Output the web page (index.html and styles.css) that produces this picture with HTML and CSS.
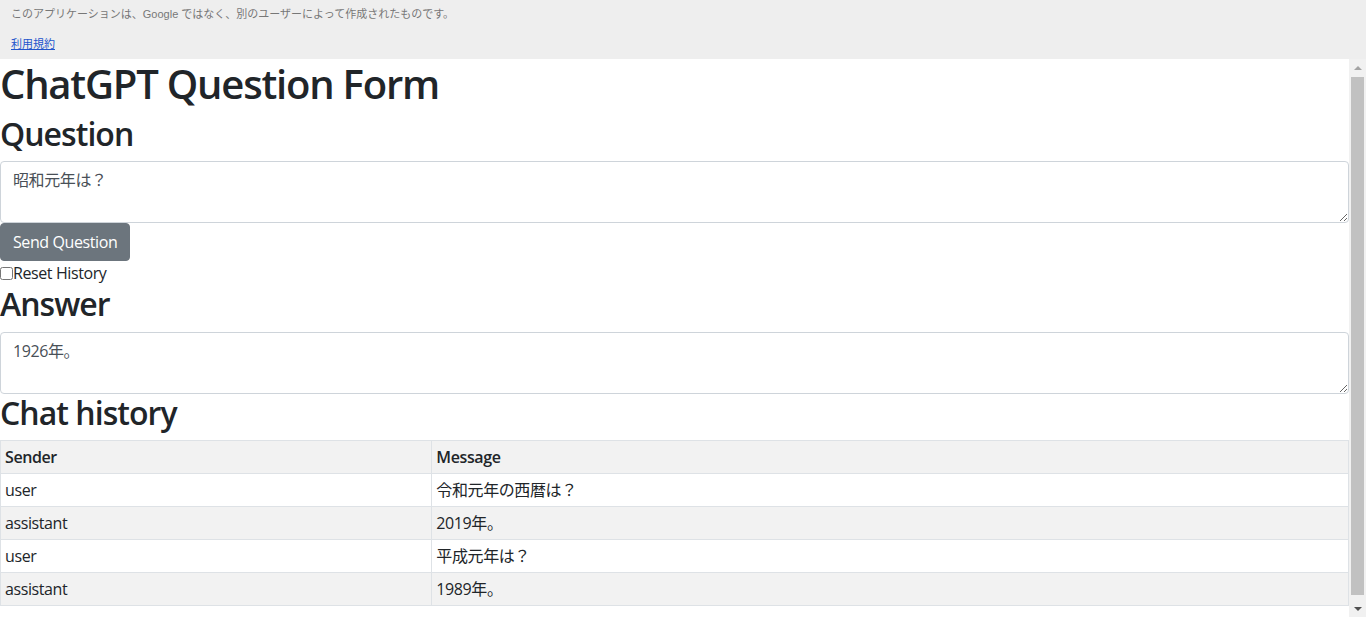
FILE: index.html
```html
<!DOCTYPE html>
<html lang="ja">
<head>
    <meta charset="UTF-8">
    <meta name="viewport" content="width=device-width, initial-scale=1.0">
    <title>ChatGPT Question Form</title>
    <link rel="stylesheet" href="styles.css">
</head>
<body>
    <!-- Apps Script warning banner -->
    <div class="banner">
        <div class="banner-text">このアプリケーションは、Google ではなく、別のユーザーによって作成されたものです。</div>
        <a class="banner-link" href="#">利用規約</a>
    </div>

    <div class="frame">
        <div class="page">
            <h1>ChatGPT Question Form</h1>

            <h2>Question</h2>
            <textarea class="form-control" id="question" rows="2">昭和元年は？</textarea>
            <button class="btn-send" id="send">Send Question</button>
            <div class="reset-row">
                <input type="checkbox" id="reset-history"><label for="reset-history">Reset History</label>
            </div>

            <h2>Answer</h2>
            <textarea class="form-control" id="answer" rows="2">1926年。</textarea>

            <h2>Chat history</h2>
            <table class="history">
                <thead>
                    <tr>
                        <th class="col-sender">Sender</th>
                        <th>Message</th>
                    </tr>
                </thead>
                <tbody>
                    <tr><td>user</td><td>令和元年の西暦は？</td></tr>
                    <tr><td>assistant</td><td>2019年。</td></tr>
                    <tr><td>user</td><td>平成元年は？</td></tr>
                    <tr><td>assistant</td><td>1989年。</td></tr>
                </tbody>
            </table>
        </div>

        <!-- scrollbar of the embedded frame -->
        <div class="scrollbar">
            <div class="arrow arrow-up"></div>
            <div class="thumb"></div>
            <div class="arrow arrow-down"></div>
        </div>
    </div>
</body>
</html>
```

FILE: styles.css
```css
* {
    box-sizing: border-box;
}
body {
    margin: 0;
    padding: 0;
    height: 617px;
    overflow: hidden;
    display: flex;
    flex-direction: column;
    font-family: "Segoe UI", "Open Sans", "Noto Sans CJK JP", sans-serif;
    color: #212529;
}
.banner {
    height: 59px;
    flex: none;
    background: #eeeeee;
    padding: 8px 11px 0;
    display: flex;
    flex-direction: column;
    align-items: flex-start;
    font-family: Arial, "Liberation Sans", "Noto Sans CJK JP", sans-serif;
    font-size: 11px;
    line-height: 13px;
}
.banner-text {
    color: #777777;
}
.banner-link {
    margin-top: 17px;
    color: #2255cc;
}
.frame {
    flex: 1;
    display: flex;
    min-height: 0;
    background: #fff;
}
.page {
    flex: 1;
    min-width: 0;
    font-size: 16px;
    line-height: 1.5;
    letter-spacing: -0.025em;
}
h1, h2 {
    margin: 0 0 8px;
    font-weight: 600;
    line-height: 1.2;
    letter-spacing: -0.03em;
}
h1 {
    font-size: 40px;
    padding-top: 1px;
    margin-bottom: 7px;
}
h2 {
    font-size: 32px;
}
.form-control {
    display: block;
    width: 100%;
    height: 62px;
    padding: 6px 12px;
    margin: 0;
    font-family: inherit;
    font-size: 16px;
    line-height: 1.5;
    letter-spacing: inherit;
    color: #495057;
    border: 1px solid #ced4da;
    border-radius: 4px;
    resize: vertical;
}
.btn-send {
    display: block;
    padding: 6px 12px;
    margin: 0;
    font-family: inherit;
    font-size: 16px;
    line-height: 1.5;
    letter-spacing: inherit;
    color: #fff;
    background-color: #6c757d;
    border: 1px solid #6c757d;
    border-radius: 4px;
    cursor: pointer;
}
.reset-row {
    display: flex;
    align-items: center;
    height: 24px;
}
.reset-row input {
    margin: 0;
    width: 13px;
    height: 13px;
}
.history {
    width: 100%;
    border-collapse: collapse;
}
.history th,
.history td {
    border: 1px solid #dee2e6;
    padding: 4px 4px;
    text-align: left;
    line-height: 24px;
}
.history th {
    font-weight: 600;
}
.col-sender {
    width: 32%;
}
.history thead tr,
.history tbody tr:nth-child(even) {
    background: #f2f2f2;
}
.scrollbar {
    width: 17px;
    flex: none;
    background: #f1f1f1;
    display: flex;
    flex-direction: column;
    align-items: center;
}
.arrow {
    height: 17px;
    width: 17px;
    flex: none;
    display: flex;
    align-items: center;
    justify-content: center;
}
.arrow::before {
    content: "";
    border-left: 4px solid transparent;
    border-right: 4px solid transparent;
}
.arrow-up::before {
    border-bottom: 4px solid #a3a3a3;
}
.arrow-down::before {
    border-top: 4px solid #505050;
}
.thumb {
    flex: 1;
    width: 13px;
    margin: 1px 0 5px;
    background: #c1c1c1;
}
```
